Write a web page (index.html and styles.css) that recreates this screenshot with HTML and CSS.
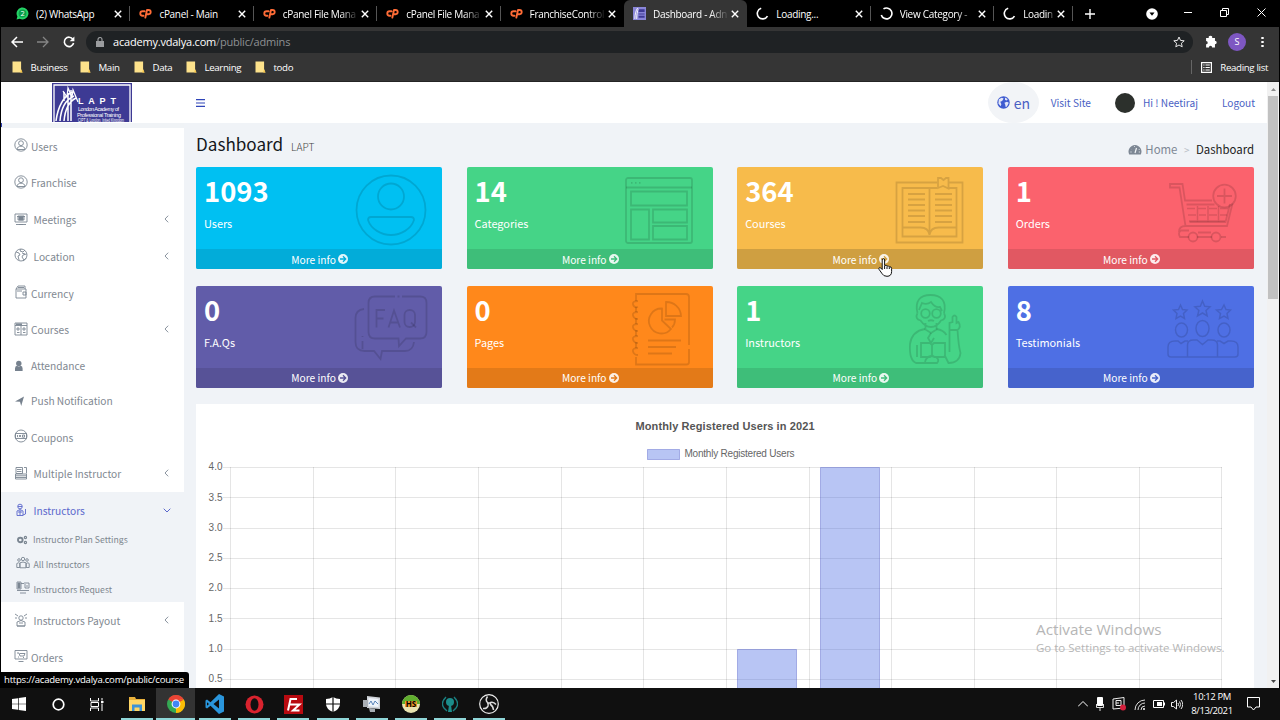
FILE: index.html
```html
<!DOCTYPE html>
<html lang="en">
<head>
  <meta charset="UTF-8">
  <title>Dashboard - Admin</title>
  <link rel="stylesheet" href="styles.css">
</head>
<body>

<!-- shared icons -->
<svg class="defs" aria-hidden="true">
  <symbol id="i-close" viewBox="0 0 8 8"><path d="M.8.8l6.4 6.4M7.2.8L.8 7.2" stroke="#fff" stroke-width="1.4" fill="none"/></symbol>
  <symbol id="i-cp" viewBox="0 0 14 12"><path d="M6 3.6H3.8a2.4 2.4 0 0 0 0 4.8h1M6.8 10.5l1.8-8.3h1.7a2.2 2.2 0 0 1 0 4.6H8.6" fill="none" stroke="#ff6c37" stroke-width="2" stroke-linecap="round" stroke-linejoin="round"/></symbol>
  <symbol id="i-spin" viewBox="0 0 12 12"><path d="M4.8 1.2a5 5 0 1 0 5.8 7.2" fill="none" stroke="#fff" stroke-width="1.5"/></symbol>
  <symbol id="i-spin2" viewBox="0 0 12 12"><path d="M3.2 1.8a5 5 0 1 1-2 5.6" fill="none" stroke="#fff" stroke-width="1.5"/></symbol>
  <symbol id="i-folder" viewBox="0 0 11 12"><path d="M.5.5h8.6v7.8l1.4 3.2H.5z" fill="#fde28b"/><path d="M9.1 8.3l1.4 3.2H8.2z" fill="#f6c445"/></symbol>
  <symbol id="i-arrow" viewBox="0 0 10 10"><circle cx="5" cy="5" r="5" fill="#fff" fill-opacity=".88"/><path d="M2 5h5.4M5 2.3L7.7 5 5 7.7" fill="none" stroke="var(--c)" stroke-width="1.3"/></symbol>
  <symbol id="i-left" viewBox="0 0 5 8"><path d="M4.2.7L1 4l3.2 3.3" fill="none" stroke="#7d8794" stroke-width=".9"/></symbol>
  <symbol id="i-user" viewBox="0 0 14 14"><circle cx="7" cy="7" r="6.2"/><circle cx="7" cy="5.2" r="2.4"/><path d="M3 11.5c0-4.4 8-4.4 8 0z"/></symbol>
</svg>

<div class="browser">
  <div class="tabs">
    <div class="tab">
      <svg class="fav" viewBox="0 0 14 14"><path d="M.6 13.4l.9-3.2A6.4 6.4 0 1 1 4 12.6z" fill="#25d366"/><circle cx="7" cy="7" r="4.2" fill="#0a9f4a"/><text x="7" y="9.8" text-anchor="middle" font-size="8" fill="#fff" font-family="Open Sans">2</text></svg>
      <span class="label">(2) WhatsApp</span><svg class="x"><use href="#i-close"/></svg>
    </div>
    <div class="tab"><svg class="fav"><use href="#i-cp"/></svg><span class="label">cPanel - Main</span><svg class="x"><use href="#i-close"/></svg></div>
    <div class="tab"><svg class="fav"><use href="#i-cp"/></svg><span class="label fade">cPanel File Mana</span><svg class="x"><use href="#i-close"/></svg></div>
    <div class="tab"><svg class="fav"><use href="#i-cp"/></svg><span class="label fade">cPanel File Mana</span><svg class="x"><use href="#i-close"/></svg></div>
    <div class="tab last"><svg class="fav"><use href="#i-cp"/></svg><span class="label fade">FranchiseControl</span><svg class="x"><use href="#i-close"/></svg></div>
    <div class="tab active">
      <svg class="fav" viewBox="0 0 14 14"><path d="M0 0h14v14H0z" fill="#8a86d8"/><path d="M2 13C2 8 3 4 5 1M4 13c0-5 .5-8 2-11" stroke="#fff" fill="none"/><path d="M6 2.500h6.500v3H6zM6 7h6.500v1H6zM6 9.500h6.500v2H6z" fill="#3f3a96"/></svg>
      <span class="label fade">Dashboard - Adn</span><svg class="x"><use href="#i-close"/></svg>
    </div>
    <div class="tab"><svg class="fav"><use href="#i-spin"/></svg><span class="label">Loading...</span><svg class="x"><use href="#i-close"/></svg></div>
    <div class="tab"><svg class="fav"><use href="#i-spin2"/></svg><span class="label fade">View Category -</span><svg class="x"><use href="#i-close"/></svg></div>
    <div class="tab short"><svg class="fav"><use href="#i-spin"/></svg><span class="label fade">Loadin</span><svg class="x"><use href="#i-close"/></svg></div>
    <svg class="plus" viewBox="0 0 10 10"><path d="M5 0v10M0 5h10" stroke="#fff" stroke-width="1.4"/></svg>
    <div class="window-buttons">
      <svg width="12" height="12" viewBox="0 0 12 12"><circle cx="6" cy="6" r="5.800" fill="#fff"/><path d="M3.500 4.500h5L6 7.800z" fill="#000"/></svg>
      <svg width="8" height="10" viewBox="0 0 8 10"><path d="M0 5.500h8" stroke="#fff"/></svg>
      <svg width="9" height="9" viewBox="0 0 9 9"><path d="M.5 2.500h6v6h-6zM2.500 2.500v-2h6v6h-2" fill="none" stroke="#fff"/></svg>
      <svg width="9" height="9" viewBox="0 0 9 9"><path d="M.5.500l8 8M8.500.500l-8 8" stroke="#fff"/></svg>
    </div>
  </div>

  <div class="toolbar">
    <svg class="nav" viewBox="0 0 12 12"><path d="M12 6H1.300M6 1L1 6l5 5" fill="none" stroke="#fff" stroke-width="1.500"/></svg>
    <svg class="nav" viewBox="0 0 12 12"><path d="M0 6h10.700M6 1l5 5-5 5" fill="none" stroke="#858585" stroke-width="1.300"/></svg>
    <svg class="nav" viewBox="0 0 12 12"><path d="M9.900 3.200A4.700 4.700 0 1 0 10.600 7" fill="none" stroke="#fff" stroke-width="1.600"/><path d="M11.400.500v4.700H6.700z" fill="#fff"/></svg>
    <div class="address">
      <svg width="8" height="10" viewBox="0 0 8 10"><path d="M0 4h8v6H0z" fill="#9a9c9e"/><path d="M2 4V2.500a2 2 0 0 1 4 0V4" fill="none" stroke="#9a9c9e" stroke-width="1.200"/></svg>
      <span class="url">academy.vdalya.com<i>/public/admins</i></span>
      <svg class="star" viewBox="0 0 12 12"><path d="M6 1l1.500 3.400 3.700.4-2.800 2.400.8 3.600L6 9l-3.200 1.800.8-3.600L.8 4.800l3.700-.4z" fill="none" stroke="#e8e8e8"/></svg>
    </div>
    <svg class="puzzle" viewBox="0 0 12 12"><path d="M1 2.800h2.500a1.600 1.600 0 1 1 3.100 0h2.600v2.600a1.600 1.600 0 1 1 0 3.200V11.500H6.600a1.500 1.500 0 0 0-3 0H1V8.600a1.500 1.500 0 0 0 0-3z" fill="#fff"/></svg>
    <span class="avatar">S</span>
    <svg class="dots" viewBox="0 0 3 12"><path d="M.3 1h2.400v2H.3zM.3 5h2.400v2H.3zM.3 9h2.400v2H.3z" fill="#fff"/></svg>
  </div>

  <div class="bookmarks">
    <span class="bm b1"><svg><use href="#i-folder"/></svg>Business</span>
    <span class="bm b2"><svg><use href="#i-folder"/></svg>Main</span>
    <span class="bm b3"><svg><use href="#i-folder"/></svg>Data</span>
    <span class="bm b4"><svg><use href="#i-folder"/></svg>Learning</span>
    <span class="bm b5"><svg><use href="#i-folder"/></svg>todo</span>
    <span class="reading"><svg viewBox="0 0 11 11"><path d="M.6.6h9.800v9.800H.6z" fill="none" stroke="#fff" stroke-width="1.200"/><path d="M2.300 3h1.200M4.500 3h4.300M2.300 5.500h1.200M4.500 5.500h4.300M2.300 8h1.200M4.500 8h4.300" stroke="#fff" stroke-width="1.100"/></svg>Reading list</span>
  </div>
</div>

<div class="page">
  <aside class="sidebar">
    <div class="brand">
      <svg class="logo" width="80" height="39" viewBox="0 0 80 39">
        <path d="M0 0h80v39H0z" fill="#3d3a94"/>
        <path d="M2 39V2h76v37" fill="none" stroke="#fff" stroke-width="1.300"/>
        <path d="M4 38C6 23 11 14 20 9M8 38c1-13 5-21 14-25M12 38c1-11 4-19 12-23M16 38V10M19 38V7M12 9v9" fill="none" stroke="#fff" stroke-width="1.500"/>
        <path d="M11 8l4 6 1-9 4 9 1-7 5 12" fill="none" stroke="#fff" stroke-width="1.300"/>
        <text x="26" y="20.500" class="logo-name">LAPT</text>
        <text x="26" y="27.500" class="logo-sub" textLength="41">London Academy of</text>
        <text x="25" y="33.500" class="logo-sub" textLength="44">Professional Training</text>
        <text x="26" y="38.500" class="logo-sub small" textLength="46" lengthAdjust="spacingAndGlyphs">CIPT &amp; London, Inited Kingdom</text>
      </svg>
    </div>
    <div class="brand-gap"></div>
    <ul class="menu">
      <li><svg class="ico"><use href="#i-user"/></svg>Users</li>
      <li><svg class="ico"><use href="#i-user"/></svg>Franchise</li>
      <li class="wide"><svg class="ico" viewBox="0 0 14 14"><path d="M1 2h12v8H1zM5 12.500h4M3 4.500h8M4 8V4h6v4zM6 7l2-2" /><path d="M2 12.500h10"/><path d="M5 5h4v3H5z" fill="#7b8692"/></svg>Meetings<svg class="caret"><use href="#i-left"/></svg></li>
      <li class="wide"><svg class="ico" viewBox="0 0 14 14"><circle cx="7" cy="7" r="6"/><path d="M2 4l3 1 1 2-2 1 1 4M7 1L6 3l3 1 2-2M12.500 6L9 7l-1 2 2 3M8 5l3 1"/><path d="M9 13l3.500-3"/></svg>Location<svg class="caret"><use href="#i-left"/></svg></li>
      <li><svg class="ico" viewBox="0 0 14 14"><path d="M2 4h10v9H2zM2 4l2-3h7v3M4 2.500h6M9 7h3v3H9zM3 6h5"/></svg>Currency</li>
      <li><svg class="ico" viewBox="0 0 14 14"><path d="M1 1h12v12H1zM1 3.500h12M7 3.500V13M3 6h2v2H3zM3 10.500h2.500M9 6h2v2H9zM9 10.500h2.500"/><path d="M2 2.200h6" stroke-width="1.500"/></svg>Courses<svg class="caret"><use href="#i-left"/></svg></li>
      <li class="fa"><svg class="ico solid" viewBox="0 0 14 14"><circle cx="4.800" cy="4.500" r="2.700"/><path d="M1 12V9.500Q1 7 3 6.800q1.800 1.400 3.600 0 2 .2 2 2.700V12z"/></svg>Attendance</li>
      <li class="fa"><svg class="ico solid" viewBox="0 0 14 14"><path d="M10 2.500L7.200 12 6 7.800 1 7.500z"/></svg>Push Notification</li>
      <li><svg class="ico" viewBox="0 0 14 14"><circle cx="7" cy="7" r="6"/><path d="M1.500 4.500h11v5h-11zM3.500 6v2.200M5 6l2 2.200M7 6L5 8.200M8.500 6h2v2.200h-2z"/></svg>Coupons</li>
      <li class="wide"><svg class="ico" viewBox="0 0 14 14"><path d="M2 1.500h6.500v6H2zM3 3.500h4.500M3 5.500h4.500M10 1.500h2.500v6M1.500 8h11v5h-11zM1.500 9.800h11M1.500 11.500h11"/></svg>Multiple Instructor<svg class="caret"><use href="#i-left"/></svg></li>
    </ul>
    <div class="open-group">
      <div class="open-head"><svg class="ico" viewBox="0 0 14 14"><circle cx="6" cy="3.500" r="2.300"/><path d="M3 12.500V8l3-1.500L9 8v4.500zM4 9h4M6 7v5M9 12l2.500-1V6M4 3.500h4"/></svg>Instructors<svg class="down" viewBox="0 0 8 5"><path d="M.7.700L4 4 7.300.700" fill="none" stroke="#5a67cc"/></svg></div>
      <div class="sub s1"><svg class="ico" viewBox="0 0 14 14"><circle cx="5" cy="7" r="2.700" stroke-width="2.200"/><circle cx="11" cy="4" r="1.300" stroke-width="1.400"/><circle cx="11" cy="10" r="1.300" stroke-width="1.400"/></svg>Instructor Plan Settings</div>
      <div class="sub"><svg class="ico" viewBox="0 0 14 14"><circle cx="3" cy="4" r="1.300"/><circle cx="7" cy="3" r="1.700"/><circle cx="11" cy="4" r="1.300"/><path d="M.8 7.500q2-1.500 3 0v4h-3zM4 6.800q3-1.600 6 0v5H4zM10.200 7.500q2-1.500 3 0v4h-3z"/></svg>All Instructors</div>
      <div class="sub"><svg class="ico" viewBox="0 0 14 14"><path d="M1 1h4v7H1zM2 3h2M2 5h2M5 2.500h3M9 1v6h4V2h-3M10 5h2M1 9.500h12M4 12h6"/><path d="M2 2h2v5H2z" fill="#7b8692"/></svg>Instructors Request</div>
    </div>
    <ul class="menu">
      <li class="wide"><svg class="ico" viewBox="0 0 14 14"><circle cx="7" cy="5" r="2.200"/><path d="M1 1l3 2M13 1l-3 2M3 13V9q4-3 8 0v4zM5 10h4M1 5h2M11 5h2M3 13h8"/></svg>Instructors Payout<svg class="caret"><use href="#i-left"/></svg></li>
      <li><svg class="ico" viewBox="0 0 14 14"><path d="M1 1.500h12v8.500H1zM4.500 12.500h5M3 4h2l1 3h4l1-2.500H6M4 8h1M9 8.500h1"/></svg>Orders</li>
    </ul>
  </aside>

  <main class="main">
    <header class="navbar">
      <svg class="burger" viewBox="0 0 9 8"><path d="M0 .7h9M0 4h9M0 7.300h9" stroke="#2f45b8" stroke-width="1.200"/></svg>
      <div class="lang"><svg viewBox="0 0 14 14"><circle cx="7" cy="7" r="6.700" fill="#3f5bd0"/><path d="M2 3.500l3-1.700 2.200 1-1.700 2.600-2 .8 1.200 2.600-.8 2.200L1.500 8zM8 7.300l2.700-1 2 1-2 4-1.400.6-.4-2.500zM8.500 1.600l3 1.700-.8 1.500-2-.6z" fill="#fff" fill-opacity=".85"/></svg>en</div>
      <a class="visit">Visit Site</a>
      <span class="dp"></span>
      <a class="hi">Hi ! Neetiraj</a>
      <a class="logout">Logout</a>
    </header>

    <section class="content">
      <div class="heading">
        <h1>Dashboard<small>LAPT</small></h1>
        <div class="crumbs">
          <svg viewBox="0 0 14 11"><path d="M1.200 10.500A6.500 6.500 0 1 1 12.800 10.500z" fill="#7d8794"/><path d="M7 9l1.500-5M3.200 5.500h.1M2.500 8h1M10.800 5.500h.7M10.800 8h1M6 2.500h.7" stroke="#f0f3f6" stroke-width="1.200"/></svg>
          <span class="home">Home</span><span class="gt">&gt;</span><span>Dashboard</span>
        </div>
      </div>

      <div class="boxes">
        <div class="box aqua">
          <svg class="art" viewBox="0 0 72 72"><circle cx="36" cy="36" r="34.500"/><circle cx="36" cy="22.500" r="13"/><path d="M13 46q0-3 3-3h40q3 0 3 3c-3 9-13 15-23 15S16 55 13 46z"/></svg>
          <b>1093</b><p>Users</p>
          <div class="more">More info <svg><use href="#i-arrow"/></svg></div>
        </div>
        <div class="box green">
          <svg class="art" viewBox="0 0 72 72"><rect x="0" y="4" width="66" height="65" rx="2"/><path d="M0 13.500h66M5 17.500h56v14H5zM5 35.500h18v30H5zM27 35.500h34v13H27zM27 52h34v13.500H27z"/><path d="M5 8.800h1.500M9 8.800h1.500M13 8.800h1.500"/></svg>
          <b>14</b><p>Categories</p>
          <div class="more">More info <svg><use href="#i-arrow"/></svg></div>
        </div>
        <div class="box yellow">
          <svg class="art" viewBox="-1 0 72 72"><path d="M40 8.500H-.5v60H65.500v-60H52M40 14H32.500V58M32.500 14H5.500V62.500h54V14H51M41 14V4h3l2.500 2L49 4h2.500v10.500L46 12zM5.500 53.500h18q8 0 9 7.500 1-7.500 9-7.500h18"/><path d="M11 20h17M11 25.500h17M11 31h17M11 36.500h17M11 42h17M11 48h17M38 20h17M38 25.500h17M38 31h17M38 36.500h17M38 42h17M38 48h17"/></svg>
          <b>364</b><p>Courses</p>
          <div class="more">More info <svg><use href="#i-arrow"/></svg></div>
        </div>
        <div class="box red">
          <svg class="art" viewBox="0 0 72 72"><path d="M45 26.500H18L15.500 10H3v3.500h9.500L18.500 52H60l5.500-22.500M19.500 30.500h28M63 30L58.500 48H22.500M22 56.500h-8q-3.500 2-1 6.500h9M12 58q0-6 6.500-6M30 63h15M54 63h5M31 58.500h13"/><circle cx="26" cy="63" r="4.500"/><circle cx="49" cy="63" r="4.500"/><circle cx="57.500" cy="22" r="11.300"/><path d="M57.500 14.500v15M50 22h15"/><path d="M20 34.500h8M31 34.500h8M42 34.500h8M53 34.500h8M21 41h8M32 41h7M42 41h8M53 41h7M22 47h36M30.500 32v16M41 32v16M51.500 32v16" stroke-width="1.500"/></svg>
          <b>1</b><p>Orders</p>
          <div class="more">More info <svg><use href="#i-arrow"/></svg></div>
        </div>
        <div class="box purple">
          <svg class="art" viewBox="0 0 72 72"><path d="M40 3.500H20q-6.500 0-6.500 6.500v29q0 6.500 6.500 6.500h23.500l.5 7.500 7-7.500h14q6.500 0 6.500-6.500V10q0-6.500-6.500-6.500H47M42.500 3.500h2M9 16q-8.500 1-8.500 9v24q0 9 9 9h9.500l6.500 8 1.500-8H50q8 0 9-9M7.500 48v8M7.500 43v1"/><path d="M21.500 34.500V17h8.500M21.500 25.500h7M33.500 34.500L39 17.500l6 17M35.500 29.500h7.500M61 34.500l-5-5"/><rect x="49.500" y="17" width="10.500" height="17" rx="5"/></svg>
          <b>0</b><p>F.A.Qs</p>
          <div class="more">More info <svg><use href="#i-arrow"/></svg></div>
        </div>
        <div class="box orange">
          <svg class="art" viewBox="0 0 72 72"><path d="M10 8V1h50q3 0 3 3v48M63 56v13q0 2.500-2.500 2.500H10V64M10 14v5M10 25v6M10 37v6M10 49v6"/><path d="M12 8q-6 0-5 3.500T12 14M12 19q-6 0-5 3.500T12 26M12 31q-6 0-5 3.500T12 38M12 43q-6 0-5 3.500T12 50M12 55q-6 0-5 3.500T12 62"/><path d="M36 15.500v12L45 36A12.500 12.500 0 1 1 36 15.500zM40 9v14h15A14.500 14.500 0 0 0 40 9zM38.500 26.500H49q0 5-3 8M22 47.500h33M22 54h28M22 60.500h24"/></svg>
          <b>0</b><p>Pages</p>
          <div class="more">More info <svg><use href="#i-arrow"/></svg></div>
        </div>
        <div class="box green">
          <svg class="art" viewBox="-1 0 72 72"><path d="M20.500 20C17.500 8 23 2 33.500 2S50 8 47 20M22 17l3-7q5 2 9-1 4 6 9 5l2 4M20.500 20q-3 6 3 7.500Q28 34 34 34t10-6.500q6-1.500 3-7.500M28.500 30v6.500L34 40l5.500-3.500V30M31 28q3-1.500 6 0"/><circle cx="28.500" cy="20.500" r="4.300"/><circle cx="39.500" cy="20.500" r="4.300"/><path d="M28 36q-13 2-15 15-1 16 6 19h21q3-3-1-6l-5-1q-5 1-6 6M39.500 36q7 1 10 6M52.500 37h8q1 16 3 23-1 10-12 10l-4-8M52.500 37V59M52.500 37v-7l3-1v-5q2-3 4 0v6l2-1q3 5-1 8M24 50v14h9l2-2 2 2h11V50H37l-2 2-2-2zM35 52v10M34 40l-3 5 3 5 3-5M20 52v12"/></svg>
          <b>1</b><p>Instructors</p>
          <div class="more">More info <svg><use href="#i-arrow"/></svg></div>
        </div>
        <div class="box blue">
          <svg class="art thin" viewBox="0 0 72 72"><path d="M13.500 12l2 4.500 4.500.5-3.500 3.500 1 5-4-2.500-4.500 2.500 1-5L6.500 17l5-.5zM35.500 8l2.200 5.300 5.300.5-4 3.700 1.200 5.500-4.700-3-5 3 1.400-5.500-4-3.700 5.400-.5zM57 12l2 4.500 4.500.5-3.500 3.500 1 5-4-2.500-4.500 2.500 1-5L49.500 17l5-.5z"/><ellipse cx="14.500" cy="37" rx="6" ry="7"/><ellipse cx="35.500" cy="35.500" rx="6.500" ry="8"/><ellipse cx="57" cy="37" rx="6" ry="7"/><path d="M20.500 64H4q-3 0-3-3v-7q0-6 7-6h3l3 2.500 4-2.500h3M50 64h18q3 0 3-3v-7q0-6-7-6h-3l-4 2.500-4-2.500h-3M20.500 64V52q0-5 6-5h3.500l5.500 4.500 5.500-4.500h3.500q6 0 6 5v12z"/></svg>
          <b>8</b><p>Testimonials</p>
          <div class="more">More info <svg><use href="#i-arrow"/></svg></div>
        </div>
      </div>

      <div class="chart-card">
        <svg class="chart" width="1058" height="284" viewBox="0 0 1058 284">
          <text x="529" y="25.500" class="title" textLength="179">Monthly Registered Users in 2021</text>
          <rect x="451.500" y="45.500" width="32" height="10" class="bar"/>
          <text x="488.500" y="53" textLength="110">Monthly Registered Users</text>
          <path class="grid" d="M27 63.500H1026M27 93.500H1026M27 124.500H1026M27 154.500H1026M27 184.500H1026M27 214.500H1026M27 245.500H1026M27 275.500H1026M34.500 63V284M117.500 63V284M199.500 63V284M282.500 63V284M365.500 63V284M447.500 63V284M530.500 63V284M613.500 63V284M695.500 63V284M778.500 63V284M860.500 63V284M943.500 63V284M1025.500 63V284"/>
          <path class="bar" d="M541.500 290V245.500h59V290M624.500 290V63.500h59V290"/>
          <g class="ticks">
            <text x="26.500" y="66">4.0</text><text x="26.500" y="96.500">3.5</text><text x="26.500" y="127">3.0</text><text x="26.500" y="157">2.5</text><text x="26.500" y="187">2.0</text><text x="26.500" y="217.500">1.5</text><text x="26.500" y="248">1.0</text><text x="26.500" y="278">0.5</text>
          </g>
        </svg>
      </div>
    </section>
  </main>

  <div class="scrollbar">
    <svg viewBox="0 0 5 3"><path d="M0 3h5L2.500 0z" fill="#8b8b8b"/></svg>
    <span class="thumb"></span>
    <svg class="end" viewBox="0 0 5 3"><path d="M0 0h5L2.500 3z" fill="#444"/></svg>
  </div>
</div>

<div class="taskbar">
  <span class="task"><svg width="14" height="14" viewBox="0 0 14 14"><path d="M0 2l6-.8v5.500H0zM6.700 1.100L14 0v6.700H6.700zM0 7.300h6v5.500L0 12zM6.700 7.300H14V14l-7.300-1.100z" fill="#fff"/></svg></span>
  <span class="task"><svg width="13" height="13" viewBox="0 0 13 13"><circle cx="6.500" cy="6.500" r="5.300" fill="none" stroke="#fff" stroke-width="1.700"/></svg></span>
  <span class="task"><svg width="14" height="13" viewBox="0 0 14 13"><path d="M.5 0v3h8V0M.5 13v-3h8v3M1 4.500h7.500v4H1zM12 0v2.500M12 5.500V13" fill="none" stroke="#fff"/><path d="M11 3h2.500v2H11z" fill="#fff"/></svg></span>
  <span class="task open"><svg width="18" height="16" viewBox="0 0 18 16"><path d="M1 1h6l1 2h9v11H1z" fill="#e9b13b"/><path d="M1 4h16v11H1z" fill="#ffd766"/><path d="M4 15V8.500h10V15h-2.500v-3.500h-5V15z" fill="#3c93d8"/></svg></span>
  <span class="task open current"><svg width="18" height="18" viewBox="0 0 18 18"><circle cx="9" cy="9" r="9" fill="#34a853"/><path d="M9 9L1.200 4.500A9 9 0 0 1 16.800 4.500z" fill="#ea4335"/><path d="M9 9l3.900-4.500h3.900A9 9 0 0 1 9 18z" fill="#fbbc05"/><path d="M5 4.500h12L9 9z" fill="#ea4335"/><circle cx="9" cy="9" r="4.400" fill="#fff"/><circle cx="9" cy="9" r="3.400" fill="#4285f4"/></svg></span>
  <span class="task open"><svg width="20" height="20" viewBox="0 0 20 20"><path d="M14 0l5 2.400v15.200L14 20 5.500 11.800 2 14.500.5 13.500V6.500L2 5.500l3.500 2.700zM14 5.500L8.500 10l5.500 4.500zM2 8.200v3.600L4 10z" fill="#2a96dc" fill-rule="evenodd"/></svg></span>
  <span class="task open"><svg width="19" height="19" viewBox="0 0 19 19"><circle cx="9.500" cy="9.500" r="9" fill="#d9232e"/><ellipse cx="9.500" cy="9.500" rx="4" ry="6.200" fill="#101010"/></svg></span>
  <span class="task open"><svg width="19" height="19" viewBox="0 0 19 19"><path d="M0 0h19v19H0z" fill="#b80a10"/><path d="M4 15.500L6.500 4H13M5.300 9.500h5M9.500 9.500h6L9 15.500h6.500" fill="none" stroke="#fff" stroke-width="2"/></svg></span>
  <span class="task open"><svg width="14" height="15" viewBox="0 0 14 15"><path d="M7 0q3 2 7 2v5q0 5-7 8-7-3-7-8V2q4 0 7-2z" fill="#fff"/><path d="M7 0v15M0 7h14" stroke="#101010" stroke-width="1.200"/></svg></span>
  <span class="task open"><svg width="18" height="17" viewBox="0 0 18 17"><path d="M4 0l13 1.500V13L4 12z" fill="#cfd3d8"/><path d="M5.500 2l10 1v8l-10-.8z" fill="#eef4fb"/><path d="M6 8l2-3 2 4 2-4 3 3" fill="none" stroke="#5a84b8"/><path d="M0 4h5v7H0zM6 12l6 1v3H7z" fill="#a9aeb4"/></svg></span>
  <span class="task open"><svg width="18" height="18" viewBox="0 0 18 18"><circle cx="9" cy="9" r="9" fill="#e9e3b0"/><path d="M0 9a9 9 0 0 1 18 0z" fill="#5fae2e"/><path d="M3 6h12v6H3z" fill="#f09a2a"/><text x="9" y="12" text-anchor="middle" font-size="8" font-weight="700" font-family="Open Sans">HS</text></svg></span>
  <span class="task open"><svg width="16" height="17" viewBox="0 0 16 17"><path d="M4 1Q-2 7 2 12l3 3M12 1q6 6 2 11l-3 3" fill="none" stroke="#1b7f80" stroke-width="1.400"/><circle cx="8" cy="6" r="4" fill="#1b8c8a"/><path d="M7 9h2l1 7H6z" fill="#1b8c8a"/></svg></span>
  <span class="task open"><svg width="20" height="20" viewBox="0 0 20 20"><circle cx="10" cy="10" r="9.300" fill="#111" stroke="#eee" stroke-width="1.200"/><path d="M8.500 2.500Q6 6 8.500 8.500q1.500 1 3 0 3-1 5.500 2M4 14.500q4 .5 5-2.500.5-2-.5-3.500M14.500 16q-.5-4-3-5.500V9" fill="none" stroke="#ddd" stroke-width="1.500"/></svg></span>

  <div class="tray">
    <svg width="10" height="6" viewBox="0 0 10 6"><path d="M0 5.500l5-5 5 5" fill="none" stroke="#fff"/></svg>
    <svg width="8" height="14" viewBox="0 0 8 14"><rect x="1" width="6" height="9" rx="1" fill="#fff"/><path d="M.5 7v3.500h7V7M4 10.500V14" fill="none" stroke="#ddd"/></svg>
    <svg width="14" height="14" viewBox="0 0 14 14"><path d="M1 2l11-1.500V11L1 12zM4 3.500h5v5H4zM4 6h3" fill="none" stroke="#eee"/><circle cx="11" cy="10.500" r="3" fill="#d4213d"/></svg>
    <svg width="11" height="11" viewBox="0 0 11 11"><path d="M1 11A10 10 0 0 1 11 1M4 11a7 7 0 0 1 7-7M7 11a4 4 0 0 1 4-4" fill="none" stroke="#ddd"/><circle cx="10" cy="10" r="1" fill="#fff"/></svg>
    <svg width="12" height="8" viewBox="0 0 12 8"><path d="M.5.500h10v7H.5z" fill="none" stroke="#fff"/><path d="M4 2h5v4H4zM11 2.500h1v3h-1z" fill="#fff"/></svg>
    <svg width="12" height="11" viewBox="0 0 12 11"><path d="M.5 3.500h2L5.500 1v9l-3-2.500h-2zM7 4q1 1.500 0 3M8.500 2.500q2.200 3 0 6M10 1q3.500 4.500 0 9" fill="none" stroke="#eee"/></svg>
    <div class="clock">10:12 PM<br>8/13/2021</div>
    <svg class="note" width="13" height="14" viewBox="0 0 13 14"><path d="M.5.500h12v9.500H9l-2.500 3L4 10H.5z" fill="none" stroke="#fff"/></svg>
  </div>
</div>

<!-- overlays -->
<div class="status">https://academy.vdalya.com/public/course</div>
<div class="activate"><div>Activate Windows</div><p>Go to Settings to activate Windows.</p></div>
<svg class="cursor" width="15" height="19" viewBox="0 0 15 19"><path d="M4.200 11V2q0-1.300 1.200-1.300T6.600 2v5.500q2-.7 2.400.6 1.900-.5 2.300.7 2.300-.4 2.300 1.700v3q0 4.800-4.600 4.800-3.500 0-4.800-2.500L1 11.300q-.6-1.500.7-1.800 1 0 2.500 2z" fill="#fff" stroke="#111"/><path d="M6.600 8v3M9 8.500V11M11.300 9.200V11" stroke="#111"/></svg>

</body>
</html>
```
FILE: styles.css
```css
* {
  box-sizing: border-box;
}

body {
  margin: 0;
  width: 1280px;
  height: 720px;
  overflow: hidden;
  background: #000;
  font-family: "Noto Sans CJK SC", "Open Sans", sans-serif;
  position: relative;
}

svg {
  display: block;
  flex: none;
}

.defs {
  position: absolute;
  width: 0;
  height: 0;
}

/* Browser chrome */
.browser {
  height: 82px;
  font-family: "Open Sans", sans-serif;
  color: #fff;
}

.tabs {
  height: 27px;
  padding-left: 7px;
  display: flex;
  align-items: center;
}

.tab {
  width: 123.4px;
  height: 27px;
  padding: 0 8px 0 9px;
  display: flex;
  align-items: center;
  font-size: 10px;
  letter-spacing: -0.3px;
  background: linear-gradient(#555, #555) no-repeat right 50% / 1px 15px;
}

.tab.last {
  background: none;
}

.tab.active {
  background: #353535;
  border-radius: 6px 6px 0 0;
}

.tab.short {
  width: 79px;
}

.fav {
  width: 13px;
  height: 13px;
  margin-right: 7px;
}

.label {
  flex: 1;
  overflow: hidden;
  white-space: nowrap;
  margin-right: 2px;
}

.fade {
  -webkit-mask-image: linear-gradient(90deg, #000 75%, transparent);
  mask-image: linear-gradient(90deg, #000 75%, transparent);
}

.x {
  width: 8px;
  height: 8px;
}

.plus {
  width: 10px;
  height: 10px;
  margin-left: 12px;
}

.window-buttons {
  margin: -3px 14px 0 auto;
  display: flex;
  align-items: center;
  gap: 28px;
}

.window-buttons svg:first-child {
  margin: 4px -2px 0 0;
}

.toolbar {
  height: 27px;
  margin: 0 1px;
  padding: 2px 11px 0 10px;
  background: #353535;
  display: flex;
  align-items: center;
}

.nav {
  width: 12px;
  height: 12px;
  margin-right: 14px;
}

.nav:nth-child(3) {
  margin-right: 11px;
}

.address {
  width: 1107px;
  height: 22px;
  padding: 0 8px 0 10px;
  border-radius: 11px;
  background: #1f2224;
  display: flex;
  align-items: center;
}

.url {
  margin-left: 9px;
  font-size: 11px;
  letter-spacing: -0.2px;
}

.url i {
  font-style: normal;
  color: #8e9193;
}

.star {
  width: 12px;
  height: 12px;
  margin-left: auto;
}

.puzzle {
  width: 13px;
  height: 13px;
  margin-left: 12px;
}

.avatar {
  width: 18px;
  height: 18px;
  margin-left: 10px;
  border-radius: 50%;
  background: #7e57c2;
  font-size: 9px;
  line-height: 18px;
  text-align: center;
}

.dots {
  width: 3px;
  height: 12px;
  margin-left: 15px;
}

.bookmarks {
  height: 28px;
  margin: 0 1px;
  padding: 0 11px 1px 11px;
  background: #353535;
  border-bottom: 1px solid #242424;
  display: flex;
  align-items: center;
  font-size: 9.7px;
  letter-spacing: -0.35px;
}

.bm {
  display: flex;
  align-items: center;
}

.bm svg {
  width: 11px;
  height: 12px;
  margin-right: 7.5px;
}

.b1 { width: 68px; }
.b2 { width: 54px; }
.b3 { width: 52px; }
.b4 { width: 69px; }

.reading {
  margin-left: auto;
  padding-left: 9px;
  height: 14px;
  border-left: 1px solid #666;
  display: flex;
  align-items: center;
}

.reading svg {
  width: 11px;
  height: 11px;
  margin-right: 8px;
}

/* Page */
.page {
  height: 606px;
  margin: 0 1px;
  display: flex;
  background: #f0f3f7;
  overflow: hidden;
}

.sidebar {
  width: 183px;
  background: #fff;
}

.brand {
  height: 41px;
  padding: 1px 0 0 51px;
}

.logo-name {
  font: 700 9px "Liberation Sans", sans-serif;
  letter-spacing: 4.8px;
  fill: #fff;
}

.logo-sub {
  font: 5.5px "Liberation Sans", sans-serif;
  fill: #fff;
}

.logo-sub.small {
  font-size: 5px;
}

.brand-gap {
  height: 4.5px;
  background: linear-gradient(#3040b0, #3040b0) no-repeat 0 0 / 1px 4px, #f0f3f6;
}

.menu {
  margin: 0;
  padding: 0;
  list-style: none;
  color: #7f8891;
}

.menu li,
.open-head {
  height: 36.75px;
  padding: 1.5px 15px 0 13px;
  display: flex;
  align-items: center;
  font-size: 10.2px;
  line-height: 16px;
  white-space: nowrap;
}

.menu li.fa {
  height: 35.2px;
  padding-top: 0;
}

.ico {
  width: 14px;
  height: 14px;
  margin: -3px 3px 0 0;
  fill: none;
  stroke: #7b8692;
  stroke-width: 0.9;
}

.wide .ico,
.open-head .ico {
  margin-right: 5.5px;
}

.solid {
  margin-top: 0;
  fill: #76818e;
  stroke: none;
}

.caret {
  width: 5px;
  height: 8px;
  margin: -2px 0 0 auto;
}

.open-group {
  height: 110px;
  background: #f0f3f7;
  color: #7d868e;
}

.open-head {
  height: 37px;
  padding-right: 13px;
  color: #5a67cc;
}

.open-head .ico {
  stroke: #5a67cc;
}

.down {
  width: 8px;
  height: 5px;
  margin: -2px 0 0 auto;
}

.sub {
  height: 25.4px;
  padding: 2px 0 0 15px;
  display: flex;
  align-items: center;
  font-size: 8.7px;
  line-height: 14px;
}

.sub .ico {
  margin-right: 3.5px;
}

.sub.s1 {
  height: 22px;
  padding-top: 1px;
}

.s1 .ico {
  width: 12px;
  height: 12px;
  margin: 0 5px 0 0;
}

.main {
  width: 1083px;
}

.navbar {
  height: 41px;
  padding: 0 12px 0 12px;
  background: #fff;
  display: flex;
  align-items: center;
  font-size: 10.1px;
  color: #4a5fc4;
  line-height: 16px;
}

.burger {
  width: 9px;
  height: 8px;
}

.lang {
  width: 51px;
  height: 41px;
  margin-left: auto;
  border-radius: 50%;
  background: #f2f4f7;
  display: flex;
  align-items: center;
  justify-content: center;
  gap: 4px;
  font-size: 14px;
}

.lang svg {
  width: 13px;
  height: 13px;
}

.visit {
  margin-left: 12px;
}

.dp {
  width: 20px;
  height: 20px;
  margin: 0 8px 0 24px;
  border-radius: 50%;
  background: #2c302c;
}

.logout {
  margin-left: 24px;
}

.content {
  padding: 0 13px 0 12px;
}

.heading {
  height: 44px;
  display: flex;
  justify-content: space-between;
}

h1 {
  margin: 8px 0 0;
  font-size: 17.1px;
  font-weight: 400;
  line-height: 26px;
  color: #15181c;
}

small {
  margin-left: 8px;
  font-size: 10.2px;
  font-weight: 300;
  color: #444;
}

.crumbs {
  margin-top: 17px;
  height: 18px;
  display: flex;
  align-items: center;
  font-size: 11.4px;
  color: #222;
}

.crumbs svg {
  width: 14px;
  height: 11px;
  margin-right: 3px;
}

.home {
  color: #7d8794;
}

.gt {
  margin: 0 6.5px;
  color: #b8bec6;
  font-size: 10px;
}

.boxes {
  display: grid;
  grid-template-columns: repeat(4, 1fr);
  gap: 16.5px 24.3px;
}

.box {
  height: 102px;
  padding: 0 8px;
  position: relative;
  border-radius: 2px;
  background: var(--bg);
  color: #fff;
  display: flex;
  flex-direction: column;
}

.aqua { --bg: #00c0f2; --c: #02acd9; }
.green { --bg: #45d487; --c: #3ebe79; }
.yellow { --bg: #f7bb4b; --c: #cf9f41; }
.red { --bg: #fb626d; --c: #e15862; }
.purple { --bg: #615ca9; --c: #575297; }
.orange { --bg: #ff881b; --c: #e37a18; }
.blue { --bg: #4e6fe4; --c: #4663cc; }

.box b {
  margin-top: 6.4px;
  font-size: 27.4px;
  line-height: 34px;
}

.box p {
  margin: 7px 0 0;
  font-size: 10.9px;
  line-height: 18px;
}

.more {
  height: 20px;
  margin: auto -8px 0;
  padding-left: 1px;
  display: flex;
  align-items: center;
  justify-content: center;
  gap: 2px;
  font-size: 10.2px;
  background: var(--c);
  border-radius: 0 0 2px 2px;
}

.more svg {
  width: 10px;
  height: 10px;
}

/* Faint drawing in the corner of each box */
.art {
  width: 72px;
  height: 72px;
  position: absolute;
  top: 7px;
  right: 15px;
  overflow: visible;
  fill: none;
  stroke: rgba(0, 0, 0, 0.13);
  stroke-width: 1.8;
}

.art.thin {
  stroke-width: 1.5;
}

.chart-card {
  margin-top: 16px;
  height: 300px;
  background: #fff;
}

.chart text {
  font: 10px "Liberation Sans", sans-serif;
  fill: #666;
}

.chart .title {
  font-size: 11px;
  font-weight: 700;
  text-anchor: middle;
  fill: #555;
}

.chart .ticks text {
  text-anchor: end;
}

.grid {
  stroke: rgba(0, 0, 0, 0.1);
}

.bar {
  fill: rgba(78, 111, 228, 0.4);
  stroke: rgba(78, 90, 200, 0.4);
}

.scrollbar {
  width: 12px;
  background: #f1f1f1;
  display: flex;
  flex-direction: column;
  align-items: center;
  padding: 6px 0 5px;
}

.scrollbar svg {
  width: 5px;
  height: 3px;
}

.thumb {
  width: 10px;
  height: 203px;
  margin-top: 5px;
  background: #c1c1c1;
}

.scrollbar .end {
  margin-top: auto;
}

/* Windows taskbar */
.taskbar {
  height: 32px;
  background: #101010;
  display: flex;
  font-family: "Open Sans", sans-serif;
  color: #fff;
}

.task {
  width: 39.2px;
  display: flex;
  align-items: center;
  justify-content: center;
}

.task:first-child {
  margin-left: -0.5px;
}

.task.open {
  background: linear-gradient(#8fd6d8, #8fd6d8) no-repeat 50% 100% / 32px 2px;
}

.task.current {
  background: linear-gradient(#8fd6d8, #8fd6d8) no-repeat 50% 100% / 100% 2px, #333;
}

.tray {
  margin-left: auto;
  padding-right: 20px;
  display: flex;
  align-items: center;
  gap: 8px;
}

.tray svg:nth-child(6) {
  margin-left: -1.5px;
}

.clock {
  width: 42px;
  font-size: 9.5px;
  line-height: 14px;
  letter-spacing: -0.4px;
  text-align: center;
  white-space: nowrap;
}

.note {
  margin-left: 6px;
}

.status {
  position: absolute;
  left: 0;
  top: 672px;
  width: 189px;
  height: 16px;
  padding-left: 4px;
  border-radius: 0 3px 0 0;
  background: #000;
  color: #fff;
  font: 9.6px/16px "Open Sans", sans-serif;
  letter-spacing: -0.25px;
  white-space: nowrap;
}

.activate {
  position: absolute;
  left: 1036px;
  top: 619px;
  color: #b6b6b6;
  font: 15.3px/20px "Open Sans", sans-serif;
  white-space: nowrap;
}

.activate p {
  margin: 0;
  font-size: 11.5px;
  line-height: 17px;
}

.cursor {
  position: absolute;
  left: 878px;
  top: 258px;
}
```
